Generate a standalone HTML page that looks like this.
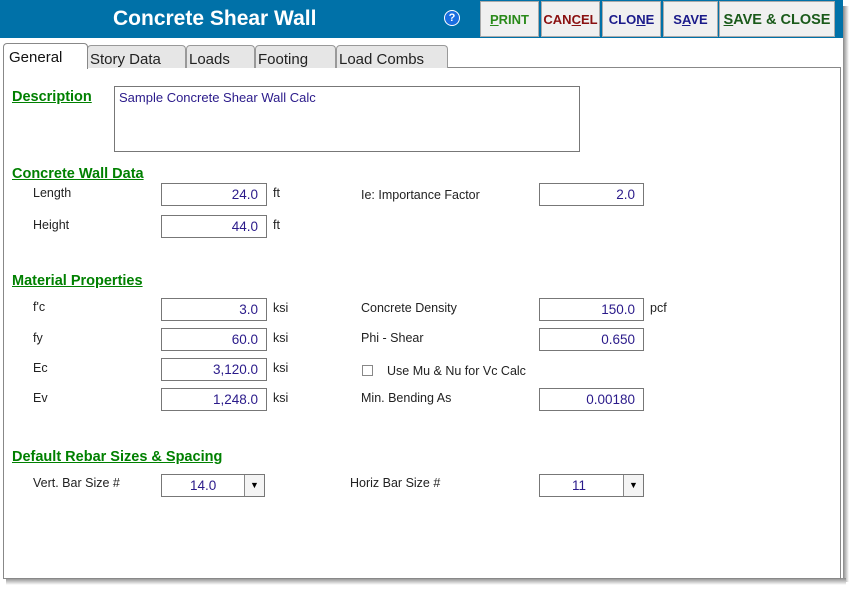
<html><head><style>
body{margin:0;width:859px;height:592px;background:#fff;position:relative;overflow:hidden;font-family:"Liberation Sans",sans-serif;}
div,span{position:absolute;box-sizing:border-box}
.hdr{left:0;top:0;width:843px;height:38px;background:#0071a8}
.title{left:113px;top:7px;color:#fff;font-weight:bold;font-size:21px}
.btn{top:1px;height:36px;background:#f0f0f0;border:1px solid #aaa;font-weight:bold;font-size:13px;text-align:center;line-height:36px}
.tab{top:45px;height:23px;background:#e6e6e6;border:1px solid #999;border-bottom:none;border-radius:4px 4px 0 0;font-size:15px;padding-left:2px;line-height:28px;color:#222}
.panel{left:3px;top:67px;width:838px;height:512px;border:1px solid #888;background:#fff}
.sh{left:12px;color:#008000;font-weight:bold;font-size:14.5px;text-decoration:underline}
.lb{font-size:12.5px;color:#222}
.in{height:23px;border:1px solid #777;background:#fff;font-size:13.5px;color:#2a1a8a;text-align:right;padding-right:8px;line-height:21px}
</style></head><body>
<div style="left:843px;top:6px;width:6px;height:576px;background:linear-gradient(90deg,#888,#fff)"></div>
<div style="left:6px;top:578px;width:840px;height:7px;background:linear-gradient(#888,#fff)"></div>
<div class="hdr"></div>
<div class="title">Concrete Shear Wall</div>
<div style="left:444px;top:10px;width:16px;height:16px;border-radius:50%;background:#1a6ee0;border:1px solid #fff;color:#fff;font-size:11px;font-weight:bold;text-align:center;line-height:14px">?</div>
<div class="btn" style="left:480px;width:59px;color:#2a8a1a"><u>P</u>RINT</div>
<div class="btn" style="left:541px;width:59px;color:#8a1010">CAN<u>C</u>EL</div>
<div class="btn" style="left:602px;width:59px;color:#1a1a8a">CLO<u>N</u>E</div>
<div class="btn" style="left:663px;width:55px;color:#1a1a8a">S<u>A</u>VE</div>
<div class="btn" style="left:719px;width:116px;color:#1a5a1a;font-size:14.5px"><u>S</u>AVE &amp; CLOSE</div>
<div class="panel"></div>
<div class="tab" style="left:87px;width:99px">Story Data</div>
<div class="tab" style="left:186px;width:69px">Loads</div>
<div class="tab" style="left:255px;width:81px">Footing</div>
<div class="tab" style="left:336px;width:112px">Load Combs</div>
<div style="left:3px;top:43px;width:85px;height:26px;background:#fff;border:1px solid #888;border-bottom:none;border-radius:4px 4px 0 0;font-size:15px;padding-left:5px;line-height:28px;color:#111">General</div>
<div class="sh" style="top:89px">Description</div>
<div style="left:114px;top:86px;width:466px;height:66px;border:1px solid #777;font-size:13px;color:#2a1a8a;padding:3px 4px">Sample Concrete Shear Wall Calc</div>
<div class="sh" style="top:166px">Concrete Wall Data</div>
<div class="lb" style="left:33px;top:186px">Length</div>
<div class="in" style="left:161px;top:183px;width:106px">24.0</div><div class="lb" style="left:273px;top:186px">ft</div>
<div class="lb" style="left:33px;top:218px">Height</div>
<div class="in" style="left:161px;top:215px;width:106px">44.0</div><div class="lb" style="left:273px;top:218px">ft</div>
<div class="lb" style="left:361px;top:188px">Ie: Importance Factor</div>
<div class="in" style="left:539px;top:183px;width:105px">2.0</div>
<div class="sh" style="top:273px">Material Properties</div>
<div class="lb" style="left:33px;top:300px">f'c</div><div class="in" style="left:161px;top:298px;width:106px">3.0</div><div class="lb" style="left:273px;top:301px">ksi</div>
<div class="lb" style="left:33px;top:331px">fy</div><div class="in" style="left:161px;top:328px;width:106px">60.0</div><div class="lb" style="left:273px;top:331px">ksi</div>
<div class="lb" style="left:33px;top:361px">Ec</div><div class="in" style="left:161px;top:358px;width:106px">3,120.0</div><div class="lb" style="left:273px;top:361px">ksi</div>
<div class="lb" style="left:33px;top:391px">Ev</div><div class="in" style="left:161px;top:388px;width:106px">1,248.0</div><div class="lb" style="left:273px;top:391px">ksi</div>
<div class="lb" style="left:361px;top:301px">Concrete Density</div><div class="in" style="left:539px;top:298px;width:105px">150.0</div><div class="lb" style="left:650px;top:301px">pcf</div>
<div class="lb" style="left:361px;top:331px">Phi - Shear</div><div class="in" style="left:539px;top:328px;width:105px">0.650</div>
<div style="left:362px;top:365px;width:11px;height:11px;border:1px solid #888"></div>
<div class="lb" style="left:387px;top:364px">Use Mu &amp; Nu for Vc Calc</div>
<div class="lb" style="left:361px;top:391px">Min. Bending As</div><div class="in" style="left:539px;top:388px;width:105px">0.00180</div>
<div class="sh" style="top:449px">Default Rebar Sizes &amp; Spacing</div>
<div class="lb" style="left:33px;top:476px">Vert. Bar Size #</div>
<div class="in" style="left:161px;top:474px;width:104px;text-align:left;padding-left:28px">14.0</div>
<div style="left:244px;top:475px;width:20px;height:21px;border-left:1px solid #888;background:#f4f4f4;font-size:9px;text-align:center;line-height:21px">▼</div>
<div class="lb" style="left:350px;top:476px">Horiz Bar Size #</div>
<div class="in" style="left:539px;top:474px;width:105px;text-align:left;padding-left:32px">11</div>
<div style="left:623px;top:475px;width:20px;height:21px;border-left:1px solid #888;background:#f4f4f4;font-size:9px;text-align:center;line-height:21px">▼</div>
</body></html>
